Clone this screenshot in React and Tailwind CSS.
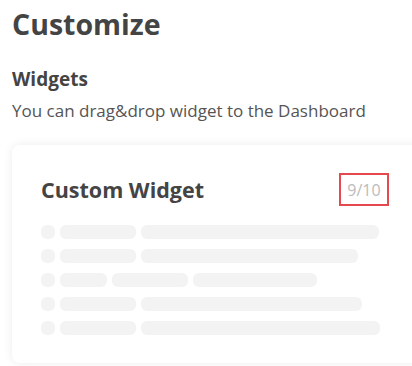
export default function App() {
  const rows = [
    [[14], [76], [238]],
    [[14], [76], [217]],
    [[14], [47], [76], [124]],
    [[14], [76], [221]],
    [[14], [76], [239]],
  ];
  return (
    <div className="w-[412px] h-[366px] bg-white overflow-hidden" style={{ fontFamily: '"Open Sans", sans-serif' }}>
      <div className="pl-[12px] pt-[4px]">
        <h1 className="text-[28.5px] leading-[40px] font-bold text-[#444]">Customize</h1>
        <h2 className="mt-[22px] text-[19px] leading-[26px] font-bold text-[#444]">Widgets</h2>
        <p className="mt-[7px] text-[17px] leading-[24px] text-[#555]">You can drag&amp;drop widget to the Dashboard</p>
        <div className="mt-[22px] w-[420px] h-[218px] rounded-[8px] bg-white shadow-[0_0_10px_rgba(0,0,0,0.08)] pl-[29px] pt-[28px]">
          <div className="flex items-center justify-between w-[348px]">
            <div className="text-[21.5px] leading-[32px] font-bold text-[#444]">Custom Widget</div>
            <div className="w-[50px] h-[33px] border-2 border-[#e5484d] flex items-center justify-center text-[16px] text-[#bbb]">9/10</div>
          </div>
          <div className="mt-[19px] flex flex-col gap-[10px]">
            {rows.map((r, i) => (
              <div key={i} className="flex gap-[5px]">
                {r.map(([w], j) => (
                  <div key={j} className="h-[14px] rounded-[6px] bg-[#f3f3f3]" style={{ width: w }} />
                ))}
              </div>
            ))}
          </div>
        </div>
      </div>
    </div>
  );
}
